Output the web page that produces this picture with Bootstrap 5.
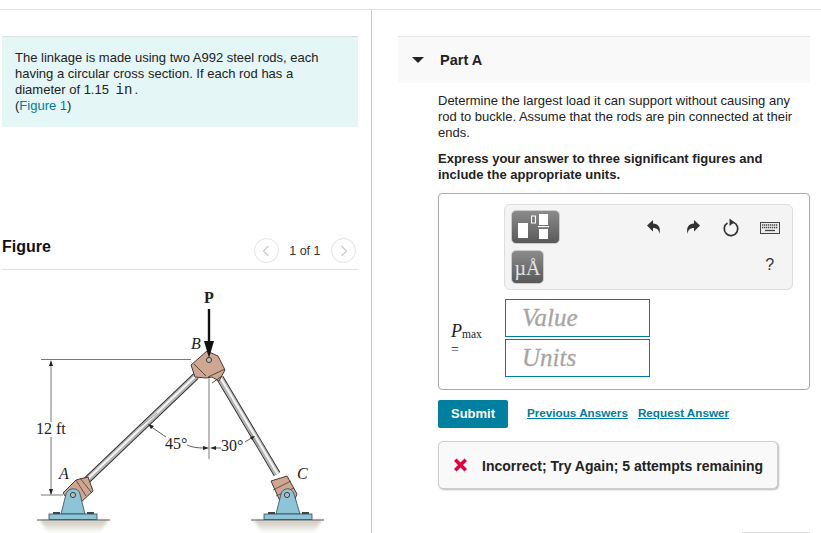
<!DOCTYPE html>
<html lang="en"><head><meta charset="utf-8"><title>Part A</title>
<link rel="stylesheet" href="https://cdn.jsdelivr.net/npm/bootstrap@5.3.0/dist/css/bootstrap.min.css">
<style>
html,body{height:533px;overflow:hidden;background:#fff}
body{font-family:"Liberation Sans",Arial,sans-serif;font-size:13px;line-height:16px;color:#222}
.sheet{margin-top:9px;border-top:1px solid #dfe1e4;height:524px}
.leftcol{width:372px;border-right:1px solid #c3cad4;flex:none;padding:26px 13px 0 2px}
.intro{background:#e4f6f6;border-top:1px solid #dcdfe0;height:91px;padding:13px 13px}
.intro a{color:#007c9c;text-decoration:none}
.monoin{font-family:"Liberation Mono",monospace;font-size:14px;line-height:14px;margin:0 2px 0 3px}
.fighead{margin-top:108px;height:35px;border-bottom:1px solid #e2e2e2}
.fighead h2{font-size:16px;font-weight:700;margin:0;line-height:20px;padding-top:2px;color:#111}
.pager{font-size:12.5px;margin-top:3px;margin-right:2px;color:#333;gap:10.500px}
.circ{width:25px;height:25px;border:1px solid #e2e2e2;border-radius:50%;color:#ccc}
.diagram{display:block;width:370px;height:263px;margin-left:-2px}
.rightcol{flex:1;padding:26px 11px 0 26px;min-width:0}
.parthead{height:47px;background:#f9f9f9;border-top:1px solid #e6e6e6;padding-left:14px;gap:16px;font-weight:700;font-size:14.5px;color:#222}
.caret{width:0;height:0;border-left:6px solid transparent;border-right:6px solid transparent;border-top:6px solid #222}
.body-part{padding-left:40px}
.body-part p{margin:0}
.desc{padding-top:10px}
.instr{font-weight:700;margin-top:10px!important}
.ansbox{margin-top:10px;height:197px;border:1px solid #aaa;border-radius:4px;padding:10px 16px 0 11px}
.tools{margin-left:54px;height:86px;background:#f4f4f4;border:1px solid #ddd;border-radius:6px;padding:5px 3px 5px 6px}
.tbtn{background:linear-gradient(#8b8b8b,#595959);border:1px solid #ccc;border-radius:5px;height:34px}
.t1{width:49px}.t2{width:33px;color:#e4e4e4;font-family:"Liberation Serif",serif;font-size:20px;line-height:34px;text-align:center;margin-top:6px}
.tbar{height:34px}
.tslot{width:38.5px;text-align:center;color:#333;line-height:16px}
.tq{margin-top:6px}
.tq .tslot{line-height:30px;font-size:16px}
.inprow{margin-top:9px}
.plabel{width:55px;padding-left:1px;font-family:"Liberation Serif",serif;font-size:11.5px;line-height:16px;padding-top:24px;color:#222}
.plabel i{font-size:18px}
.plabel sub{font-size:11.5px;vertical-align:-1px;line-height:0;bottom:0}
.eqsign{font-size:14px;line-height:12px;display:block;margin-top:3px}
.field{width:145px;height:38px;border:1px solid #007c9c;padding-left:16px;font-family:"Liberation Serif",serif;font-style:italic;font-size:25px;line-height:36px;color:#a6a6a6;margin-bottom:2px;-webkit-text-stroke:.3px #a6a6a6}
.actions{margin-top:10px;gap:19px}
.btn.subm{background:#007f9e;color:#fff;font-weight:700;font-size:13px;border:0;border-radius:2px;width:70px;height:28px;padding:0;line-height:28px}
.acts{gap:10px;font-weight:700;font-size:11.7px;margin-top:-2px}
.acts a{color:#007c9c;text-decoration:underline}
.fb{margin-top:13px;width:340px;height:48px;background:#f9f9f9;border:1px solid #ccc;border-radius:5px;box-shadow:1px 1px 2px #bbb;padding-left:14px;gap:14px;font-weight:700;font-size:14px;color:#222}
.fb span{padding-top:2px}
.tail{position:absolute;left:742px;top:532px;width:68px;border-top:1px solid #ddd}
</style></head>
<body>
<div class="sheet d-flex">
  <div class="leftcol">
    <div class="intro">The linkage is made using two A992 steel rods, each having a circular cross section. If each rod has a diameter of 1.15 <span class="monoin">in</span>.<br>(<a href="#">Figure 1</a>)</div>
    <div class="fighead d-flex justify-content-between">
      <h2>Figure</h2>
      <div class="pager d-flex align-items-center align-self-start">
        <span class="circ d-flex align-items-center justify-content-center"><svg width="8" height="12" viewBox="0 0 8 12"><path d="M6.500 1 1.500 6l5 5" fill="none" stroke="#ccc" stroke-width="1.4"/></svg></span>
        <span>1 of 1</span>
        <span class="circ d-flex align-items-center justify-content-center"><svg width="8" height="12" viewBox="0 0 8 12"><path d="M1.500 1 6.500 6l-5 5" fill="none" stroke="#ccc" stroke-width="1.4"/></svg></span>
      </div>
    </div>
    <svg class="diagram" viewBox="0 270 370 263">
      <defs>
        <linearGradient id="shd" x1="0" y1="0" x2="0" y2="1"><stop offset="0" stop-color="#c9c4b6"/><stop offset="1" stop-color="#fff"/></linearGradient>
        <filter id="blr" x="-20%" y="-40%" width="140%" height="180%"><feGaussianBlur stdDeviation="1.800"/></filter>
      </defs>
      <path d="M40 520H108L100 533H48Z" fill="url(#shd)" filter="url(#blr)"/>
      <path d="M254 520H322L314 533H262Z" fill="url(#shd)" filter="url(#blr)"/>
      <g fill="none">
        <path d="M85 482 196 376" stroke="#2a2a2a" stroke-width="7.500"/>
        <path d="M85 482 196 376" stroke="#b4b4b4" stroke-width="5.800"/>
        <path d="M85 481.500 196 375.500" stroke="#f4f4f4" stroke-width="2.200"/>
        <path d="M220 378 277 474" stroke="#2a2a2a" stroke-width="7.500"/>
        <path d="M220 378 277 474" stroke="#b4b4b4" stroke-width="5.800"/>
        <path d="M220.500 377.700 277.500 473.700" stroke="#f4f4f4" stroke-width="2.200"/>
      </g>
      <g stroke="#555" stroke-width=".8" fill="none">
        <path d="M41 359.500H191M41 495H63M51 362V422M51 437V494"/>
        <path d="M209 362V459"/>
        <path d="M140 427 157 413M249 430 259 447" stroke="#888"/>
        <path d="M166 437 150 426M187 445C194 448 200 448 207 448M216 448H221M245 442 253 437" stroke="#333"/>
      </g>
      <g fill="#222"><path d="M51 360 49 366H53ZM51 495 49 489H53ZM148 424 154 426 151 429ZM209 448 203 446V450ZM210 448 216 446V450ZM255 436 250 437 252 440Z"/></g>
      <path d="M207 351 218 356 225 370 219 381 212 377 206 378 195 377 191 365Z" fill="#cfa791" stroke="#4a3a32"/>
      <path d="M194 364 206 376M225 369 208 377M222 376 212 383" stroke="#4a3a32" stroke-width=".9" fill="none"/>
      <path d="M63 493 76 480 88 477 93 491 80 503 68 500Z" fill="#cfa791" stroke="#4a3a32"/>
      <path d="M76 480 86 496M80 478 91 492" stroke="#4a3a32" stroke-width=".8" fill="none"/>
      <path d="M271 481 287 476 297 494 293 504 280 501Z" fill="#cfa791" stroke="#4a3a32"/>
      <path d="M273 490 291 481M276 496 294 488" stroke="#4a3a32" stroke-width=".8" fill="none"/>
      <path d="M61 514 66 494C68 487 79 487 80 494L85 514Z" fill="#8dc4d8" stroke="#2c4a55" stroke-width=".8"/>
      <path d="M276 514 281 494C283 487 292 487 294 494L300 514Z" fill="#8dc4d8" stroke="#2c4a55" stroke-width=".8"/>
      <rect x="49" y="514" width="48" height="5.500" fill="#8dc4d8" stroke="#2c4a55" stroke-width=".8"/>
      <rect x="264" y="514" width="48" height="5.500" fill="#8dc4d8" stroke="#2c4a55" stroke-width=".8"/>
      <path d="M53 513h7M87 513h7M268 513h7M302 513h7" stroke="#444" stroke-width="2"/>
      <path d="M37 520H110M251 520H324" stroke="#555" stroke-width="1.200"/>
      <g fill="#b6bcc0" stroke="#333" stroke-width=".9"><circle cx="73" cy="495" r="2.600"/><circle cx="287" cy="495" r="2.600"/><circle cx="209" cy="360" r="2.600"/></g>
      <rect x="207.800" y="309" width="2.400" height="38" fill="#111"/>
      <path d="M204 341 209 358 214 341Z" fill="#111"/>
      <g font-family="Liberation Serif,serif" fill="#222" font-size="16">
        <text x="204" y="303" font-weight="700">P</text>
        <text x="191" y="349" font-style="italic">B</text>
        <text x="59" y="479" font-style="italic">A</text>
        <text x="297" y="479" font-style="italic">C</text>
        <text x="36" y="434">12 ft</text>
        <text x="165" y="449">45°</text>
        <text x="221" y="451">30°</text>
      </g>
    </svg>
  </div>
  <div class="rightcol">
    <div class="parthead d-flex align-items-center"><span class="caret"></span><span>Part A</span></div>
    <div class="body-part">
      <p class="desc">Determine the largest load it can support without causing any rod to buckle. Assume that the rods are pin connected at their ends.</p>
      <p class="instr">Express your answer to three significant figures and include the appropriate units.</p>
      <div class="ansbox">
        <div class="tools d-flex justify-content-between">
          <div>
            <div class="tbtn t1"><svg width="47" height="32" viewBox="0 0 47 32"><rect x="6" y="12" width="10" height="15" fill="#fff"/><rect x="19.500" y="5" width="4" height="7" fill="none" stroke="#fff"/><rect x="27" y="3" width="9" height="11" fill="#fff"/><rect x="26" y="15" width="11" height="1.200" fill="#fff"/><rect x="27" y="18" width="9" height="10" fill="#fff"/></svg></div>
            <div class="tbtn t2">µÅ</div>
          </div>
          <div>
            <div class="tbar d-flex align-items-center">
              <span class="tslot"><svg width="16" height="17" viewBox="0 0 16 17"><path d="M1 6.500 7 1v3.500c5 0 8 3.500 6.500 10.500C13 11 11 9 7 9v3.500Z" fill="#333"/></svg></span>
              <span class="tslot"><svg width="16" height="17" viewBox="0 0 16 17"><path d="M15 6.500 9 1v3.500C4 4.500 1 8 2.500 15 3 11 5 9 9 9v3.500Z" fill="#333"/></svg></span>
              <span class="tslot"><svg width="18" height="19" viewBox="0 0 18 19"><path d="M11 4.300A6.800 6.800 0 1 1 5.500 5" fill="none" stroke="#333" stroke-width="1.700"/><path d="M7.500 .5 12.500 4.300 7.500 8Z" fill="#333"/></svg></span>
              <span class="tslot"><svg width="20" height="12" viewBox="0 0 20 12"><rect x=".5" y=".5" width="19" height="11" fill="#eee" stroke="#444"/><path d="M2 3h16M2 5.500h16" stroke="#444" stroke-width="1.300" stroke-dasharray="1.300 .7"/><path d="M5 8.500h10" stroke="#444" stroke-width="1.300"/></svg></span>
            </div>
            <div class="tq d-flex justify-content-end"><span class="tslot">?</span></div>
          </div>
        </div>
        <div class="inprow d-flex">
          <div class="plabel"><i>P</i><sub>max</sub><span class="eqsign">=</span></div>
          <div>
            <div class="field">Value</div>
            <div class="field">Units</div>
          </div>
        </div>
      </div>
      <div class="actions d-flex align-items-center">
        <button class="btn subm" type="button">Submit</button>
        <div class="acts d-flex"><a href="#">Previous Answers</a><a href="#">Request Answer</a></div>
      </div>
      <div class="fb d-flex align-items-center">
        <svg width="15" height="14" viewBox="0 0 15 14"><path d="M1 3 3.500 .5 7.500 4.500 11.500 .5 14 3 10 7 14 11 11.500 13.500 7.500 9.500 3.500 13.500 1 11 5 7Z" fill="#e2003c"/></svg>
        <span>Incorrect; Try Again; 5 attempts remaining</span>
      </div>
    </div>
  </div>
</div>
<div class="tail"></div>
</body></html>
